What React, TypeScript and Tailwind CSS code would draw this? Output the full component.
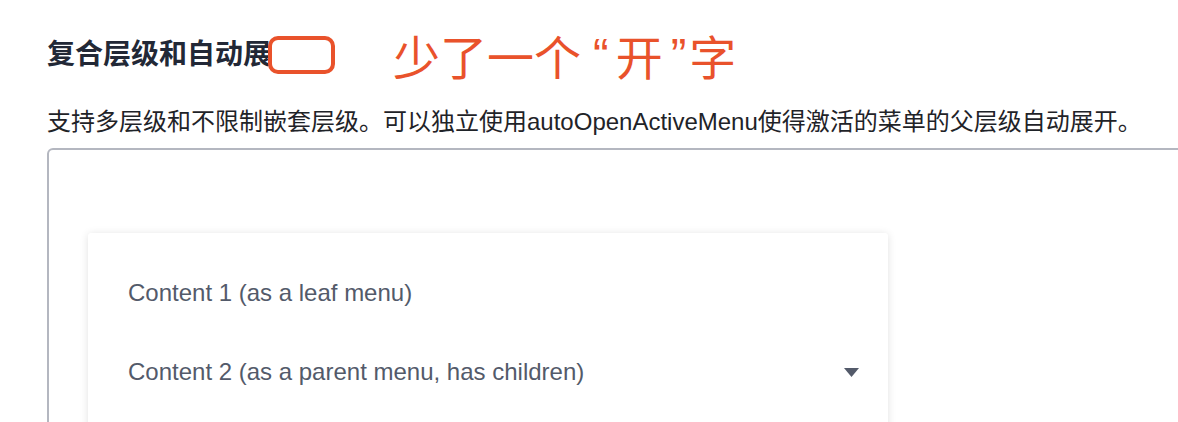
export default function App() {
  const font = { fontFamily: '"Liberation Sans", "Noto Sans CJK SC", sans-serif' };
  const cjk = { fontFamily: '"Noto Sans CJK SC", sans-serif' };
  return (
    <div className="h-[422px] w-[1178px] overflow-hidden bg-white pl-[47px]" style={font}>
      <div className="mt-[35px] flex h-[40px] items-center">
        <h3 className="text-[28px] font-bold leading-[40px] text-[#222836]">复合层级和自动展</h3>
        <span className="ml-[-3px] h-[38px] w-[67px] rounded-[10px] border-[4px] border-[#e9522b]" />
        {/* annotation: 少了一个“开”字 */}
        <span className="ml-[58px] flex items-center text-[47px] leading-[46px] text-[#e9522b]">
          <span style={cjk}>少了一个</span>
          <span className="ml-[12px]">“</span>
          <span className="ml-[7px]" style={cjk}>开</span>
          <span className="ml-[8px]">”</span>
          <span className="ml-[3px]" style={cjk}>字</span>
        </span>
      </div>
      <p className="mt-[31px] text-[24px] leading-[32px] text-[#1f2328]">
        支持多层级和不限制嵌套层级。可以独立使用autoOpenActiveMenu使得激活的菜单的父层级自动展开。
      </p>
      <div className="mt-[10px] h-[400px] w-[1160px] rounded-tl-[6px] border-2 border-[#b4b7c0] pl-[39px] pt-[83px]">
        <div className="w-[800px] rounded-[3px] bg-white pt-[20px] shadow-[0_1px_8px_rgba(0,0,0,0.12)]">
          <div className="flex h-[79px] items-center pl-[40px] text-[24px] text-[#535a6a]">
            Content 1 (as a leaf menu)
          </div>
          <div className="flex h-[79px] items-center justify-between pl-[40px] pr-[29px] text-[24px] text-[#535a6a]">
            <span>Content 2 (as a parent menu, has children)</span>
            <svg width="15" height="9" viewBox="0 0 15 9" className="mt-[2px]">
              <path d="M0 0 H15 L7.5 9 Z" fill="#535a6a" />
            </svg>
          </div>
          <div className="h-[79px]" />
        </div>
      </div>
    </div>
  );
}
